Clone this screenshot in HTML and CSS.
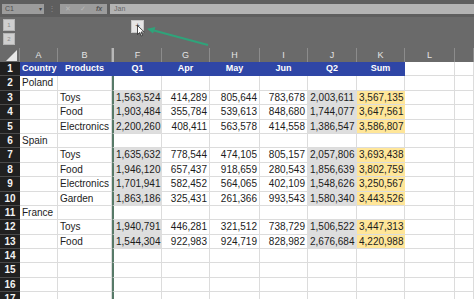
FILE: index.html
```html
<!DOCTYPE html>
<html lang="en">
	<head>
		<meta charset="utf-8" />
		<link rel="stylesheet" href="styles.css">
	</head>
	<body>
		<div class="toolbar">
			<div class="namebox"><span>C1</span><span class="caret">&#9662;</span></div>
			<div class="grip">&#8942;</div>
			<div class="fxbox"><span>&#10005;</span><span>&#10003;</span><span class="fx">fx</span></div>
			<div class="formula">Jan</div>
		</div>
		<div class="outline">
			<div class="levels">
				<div class="level">1</div>
				<div class="level">2</div>
			</div>
			<div class="group-btn">
				<span class="plus">+</span>
				<svg class="cursor" width="8" height="12" viewBox="0 0 8 12">
					<path d="M0.5 0.5 L0.5 9.5 L2.7 7.5 L4.3 11 L5.6 10.4 L4.1 7 L7.2 7 Z" fill="#fff" stroke="#222" stroke-width="0.8"/>
				</svg>
			</div>
		</div>
		<div class="sheet">
			<div class="corner"></div>
			<div class="ch">A</div><div class="ch">B</div><div class="ch ch-split">F</div><div class="ch">G</div><div class="ch">H</div><div class="ch">I</div><div class="ch">J</div><div class="ch">K</div><div class="ch">L</div><div class="ch"></div>

			<div class="rh">1</div>
			<div class="c hd hl">Country</div><div class="c hd">Products</div><div class="c hd split">Q1</div><div class="c hd">Apr</div><div class="c hd">May</div><div class="c hd">Jun</div><div class="c hd">Q2</div><div class="c hd">Sum</div><div class="c"></div><div class="c"></div>

			<div class="rh">2</div>
			<div class="c">Poland</div><div class="c"></div><div class="c split"></div><div class="c"></div><div class="c"></div><div class="c"></div><div class="c"></div><div class="c"></div><div class="c"></div><div class="c"></div>

			<div class="rh">3</div>
			<div class="c"></div><div class="c">Toys</div><div class="c n split grey">1,563,524</div><div class="c n">414,289</div><div class="c n">805,644</div><div class="c n">783,678</div><div class="c n grey">2,003,611</div><div class="c n gold">3,567,135</div><div class="c"></div><div class="c"></div>

			<div class="rh">4</div>
			<div class="c"></div><div class="c">Food</div><div class="c n split grey">1,903,484</div><div class="c n">355,784</div><div class="c n">539,613</div><div class="c n">848,680</div><div class="c n grey">1,744,077</div><div class="c n gold">3,647,561</div><div class="c"></div><div class="c"></div>

			<div class="rh">5</div>
			<div class="c"></div><div class="c">Electronics</div><div class="c n split grey">2,200,260</div><div class="c n">408,411</div><div class="c n">563,578</div><div class="c n">414,558</div><div class="c n grey">1,386,547</div><div class="c n gold">3,586,807</div><div class="c"></div><div class="c"></div>

			<div class="rh">6</div>
			<div class="c">Spain</div><div class="c"></div><div class="c split"></div><div class="c"></div><div class="c"></div><div class="c"></div><div class="c"></div><div class="c"></div><div class="c"></div><div class="c"></div>

			<div class="rh">7</div>
			<div class="c"></div><div class="c">Toys</div><div class="c n split grey">1,635,632</div><div class="c n">778,544</div><div class="c n">474,105</div><div class="c n">805,157</div><div class="c n grey">2,057,806</div><div class="c n gold">3,693,438</div><div class="c"></div><div class="c"></div>

			<div class="rh">8</div>
			<div class="c"></div><div class="c">Food</div><div class="c n split grey">1,946,120</div><div class="c n">657,437</div><div class="c n">918,659</div><div class="c n">280,543</div><div class="c n grey">1,856,639</div><div class="c n gold">3,802,759</div><div class="c"></div><div class="c"></div>

			<div class="rh">9</div>
			<div class="c"></div><div class="c">Electronics</div><div class="c n split grey">1,701,941</div><div class="c n">582,452</div><div class="c n">564,065</div><div class="c n">402,109</div><div class="c n grey">1,548,626</div><div class="c n gold">3,250,567</div><div class="c"></div><div class="c"></div>

			<div class="rh">10</div>
			<div class="c"></div><div class="c">Garden</div><div class="c n split grey">1,863,186</div><div class="c n">325,431</div><div class="c n">261,366</div><div class="c n">993,543</div><div class="c n grey">1,580,340</div><div class="c n gold">3,443,526</div><div class="c"></div><div class="c"></div>

			<div class="rh">11</div>
			<div class="c">France</div><div class="c"></div><div class="c split"></div><div class="c"></div><div class="c"></div><div class="c"></div><div class="c"></div><div class="c"></div><div class="c"></div><div class="c"></div>

			<div class="rh">12</div>
			<div class="c"></div><div class="c">Toys</div><div class="c n split grey">1,940,791</div><div class="c n">446,281</div><div class="c n">321,512</div><div class="c n">738,729</div><div class="c n grey">1,506,522</div><div class="c n gold">3,447,313</div><div class="c"></div><div class="c"></div>

			<div class="rh">13</div>
			<div class="c"></div><div class="c">Food</div><div class="c n split grey">1,544,304</div><div class="c n">922,983</div><div class="c n">924,719</div><div class="c n">828,982</div><div class="c n grey">2,676,684</div><div class="c n gold">4,220,988</div><div class="c"></div><div class="c"></div>

			<div class="rh">14</div>
			<div class="c"></div><div class="c"></div><div class="c split"></div><div class="c"></div><div class="c"></div><div class="c"></div><div class="c"></div><div class="c"></div><div class="c"></div><div class="c"></div>

			<div class="rh">15</div>
			<div class="c"></div><div class="c"></div><div class="c split"></div><div class="c"></div><div class="c"></div><div class="c"></div><div class="c"></div><div class="c"></div><div class="c"></div><div class="c"></div>

			<div class="rh">16</div>
			<div class="c"></div><div class="c"></div><div class="c split"></div><div class="c"></div><div class="c"></div><div class="c"></div><div class="c"></div><div class="c"></div><div class="c"></div><div class="c"></div>

			<div class="rh">17</div>
			<div class="c"></div><div class="c"></div><div class="c split"></div><div class="c"></div><div class="c"></div><div class="c"></div><div class="c"></div><div class="c"></div><div class="c"></div><div class="c"></div>
		</div>
		<svg class="arrow" width="474" height="60" viewBox="0 0 474 60">
			<line x1="208" y1="45" x2="152" y2="30" stroke="#2fa37a" stroke-width="2"/>
			<path d="M147 28.7 L155.5 27 L153 33.5 Z" fill="#2fa37a"/>
		</svg>
	</body>
</html>
```

FILE: styles.css
```css
html, body {
	margin: 0;
	padding: 0;
	height: 100%;
	overflow: hidden;
}
body {
	position: relative;
	font-family: "Liberation Sans", Arial, sans-serif;
	background-color: #6a6a6a;
}

/* formula bar */
.toolbar {
	display: flex;
	align-items: center;
	height: 17px;
	padding: 0 0 0 2px;
	background-color: #5e5e5e;
	box-sizing: border-box;
}
.namebox {
	display: flex;
	justify-content: space-between;
	align-items: center;
	width: 42px;
	height: 10px;
	padding: 0 2px 0 3px;
	box-sizing: border-box;
	background-color: #9c9c9c;
	color: #4d4d4d;
	font-size: 7px;
}
.caret {
	font-size: 6px;
	color: #444;
}
.grip {
	width: 16px;
	text-align: center;
	color: #8a8a8a;
	font-size: 8px;
}
.fxbox {
	display: flex;
	justify-content: space-around;
	align-items: center;
	width: 47px;
	height: 10px;
	background-color: #9c9c9c;
	color: #b8b8b8;
	font-size: 7px;
}
.fxbox .fx {
	font-style: italic;
	font-weight: bold;
	color: #555;
}
.formula {
	flex: 1;
	height: 10px;
	margin-left: 3px;
	padding-left: 4px;
	background-color: #b3b3b3;
	color: #666;
	font-size: 7px;
	line-height: 10px;
}

/* outline levels */
.outline {
	display: flex;
	height: 31px;
}
.levels {
	display: flex;
	flex-direction: column;
	gap: 2px;
	padding: 2px 0 0 3px;
}
.level {
	width: 12px;
	height: 12px;
	box-sizing: border-box;
	border: 1px solid #b5b5b5;
	background-color: #cfcfcf;
	color: #8a8a8a;
	font-size: 6px;
	line-height: 10px;
	text-align: center;
}
.group-btn {
	position: relative;
	width: 13px;
	height: 13px;
	margin: 3px 0 0 116px;
	box-sizing: border-box;
	background-color: #e6e6e6;
	border: 1px solid #c8c8c8;
	color: #333;
	font-size: 8px;
	line-height: 10px;
	text-align: center;
}
.cursor {
	position: absolute;
	left: 5px;
	top: 4px;
}
.arrow {
	position: absolute;
	left: 0;
	top: 0;
}

/* sheet grid */
.sheet {
	display: grid;
	grid-template-columns: 20px 38px 54px 50px 48px 50px 48px 49px 48px 50px 1fr;
	grid-template-rows: 14px;
	grid-auto-rows: 14.4px;
	font-size: 10px;
	color: #1c1c1c;
}
.corner {
	position: relative;
	background-color: #6a6a6a;
	border-right: 1px solid #8a8a8a;
}
.corner::after {
	content: "";
	position: absolute;
	right: 2px;
	bottom: 1px;
	border-left: 11px solid transparent;
	border-bottom: 11px solid #e8e8e8;
}
.ch {
	border-right: 1px solid #8c8c8c;
	color: #e4e4e4;
	font-size: 9px;
	line-height: 14px;
	text-align: center;
}
.ch-split {
	border-left: 2px solid #b8b8b8;
}
.rh {
	background-color: #202020;
	border-bottom: 1px solid #4a4a4a;
	color: #f2f2f2;
	font-weight: bold;
	font-size: 10px;
	line-height: 14px;
	text-align: center;
}
.c {
	background-color: #fff;
	border-right: 1px solid #dcdcdc;
	border-bottom: 1px solid #dcdcdc;
	padding: 0 2px;
	line-height: 13px;
	white-space: nowrap;
	overflow: hidden;
}
.n {
	text-align: right;
}
.split {
	border-left: 2px solid #577a68;
}
.hd {
	background-color: #2f46a6;
	border-color: #2f46a6;
	color: #fff;
	font-weight: bold;
	font-size: 9px;
	text-align: center;
}
.hl {
	text-align: left;
}
.grey {
	background-color: #dedede;
	border-right-color: #dedede;
}
.gold {
	background-color: #ffe699;
	border-right-color: #ffe699;
}
```
